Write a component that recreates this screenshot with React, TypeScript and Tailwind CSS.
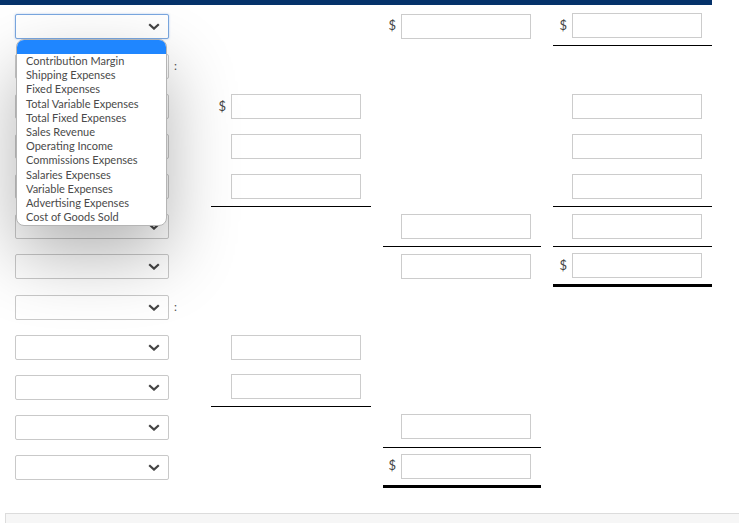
import React from "react";

type Cell = { dollar?: boolean; line?: "single" | "double" } | null;
type Row = { colon?: boolean; c2?: Cell; c3?: Cell; c4?: Cell };

const rows: Row[] = [
  { c3: { dollar: true }, c4: { dollar: true, line: "single" } },
  { colon: true },
  { c2: { dollar: true }, c4: {} },
  { c2: {}, c4: {} },
  { c2: { line: "single" }, c4: { line: "single" } },
  { c3: { line: "single" }, c4: { line: "single" } },
  { c3: {}, c4: { dollar: true, line: "double" } },
  { colon: true },
  { c2: {} },
  { c2: { line: "single" } },
  { c3: { line: "single" } },
  { c3: { dollar: true, line: "double" } },
];

const options = [
  "Contribution Margin",
  "Shipping Expenses",
  "Fixed Expenses",
  "Total Variable Expenses",
  "Total Fixed Expenses",
  "Sales Revenue",
  "Operating Income",
  "Commissions Expenses",
  "Salaries Expenses",
  "Variable Expenses",
  "Advertising Expenses",
  "Cost of Goods Sold",
];

function Chevron() {
  return (
    <svg width="12" height="7" viewBox="0 0 12 7" className="shrink-0">
      <polyline points="1.2,1.2 6,5.6 10.8,1.2" fill="none" stroke="#444" strokeWidth="2.2" />
    </svg>
  );
}

function Select({ focused }: { focused?: boolean }) {
  return (
    <div
      className={
        focused
          ? "flex h-[25px] w-[154px] items-center justify-end rounded-[2px] border border-[#7aa7e0] bg-white pr-[8px] shadow-[0_0_2px_rgba(80,140,220,0.5)]"
          : "flex h-[25px] w-[154px] items-center justify-end rounded-[2px] border border-[#c9c9c9] bg-white pr-[8px]"
      }
    >
      <Chevron />
    </div>
  );
}

function AmountCell({ cell, width }: { cell?: Cell; width: string }) {
  const line =
    cell?.line === "single"
      ? "border-b border-black"
      : cell?.line === "double"
        ? "border-b-[3px] border-black"
        : "";
  return (
    <div className={`flex h-[40.15px] items-center justify-end gap-[5px] pr-[10px] ${width} ${line}`}>
      {cell ? (
        <>
          {cell.dollar ? <span className="text-[13px] text-[#444]">$</span> : null}
          <div className="h-[25px] w-[130px] border border-[#cccccc] bg-white" />
        </>
      ) : null}
    </div>
  );
}

export default function App() {
  return (
    <div
      className="relative h-[523px] w-[739px] overflow-hidden bg-white"
      style={{ fontFamily: "Lato, 'Open Sans', sans-serif" }}
    >
      <div className="h-[5px] w-[712px] bg-[#05326a]" />
      <div className="mt-[1px] flex flex-col">
        {rows.map((r, i) => (
          <div key={i} className="flex items-start">
            <div className="flex h-[40.15px] w-[211px] items-center pl-[15px]">
              <Select focused={i === 0} />
              {r.colon ? <span className="ml-[5px] text-[12px] text-[#555]">:</span> : null}
            </div>
            <AmountCell cell={r.c2} width="w-[160px]" />
            <div className="w-[12px]" />
            <AmountCell cell={r.c3} width="w-[158px]" />
            <div className="w-[12px]" />
            <AmountCell cell={r.c4} width="w-[159px]" />
          </div>
        ))}
      </div>

      <div className="mt-[25px] ml-[5px] h-[20px] border-t border-l border-[#dcdcdc] bg-[#f6f6f6]" />

      <div className="absolute left-[16px] top-[39px] w-[151px] overflow-hidden rounded-[8px] border border-[#b5b5b5] bg-white shadow-[0_30px_70px_rgba(0,0,0,0.3)]">
        <div className="h-[14px] bg-[#1f86ff]" />
        <ul className="pb-[1px] pl-[9px] text-[11px] leading-[14.2px] text-[#4a4a4a]">
          {options.map((o) => (
            <li key={o}>{o}</li>
          ))}
        </ul>
      </div>
    </div>
  );
}
